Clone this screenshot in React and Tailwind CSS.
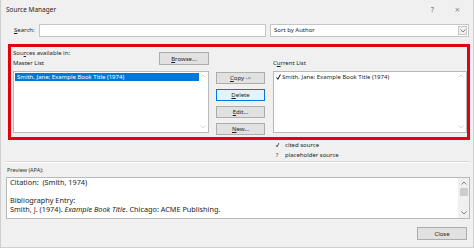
import React from "react";

const Chev = ({ up, className = "" }) => (
  <svg width="6" height="4" viewBox="0 0 6 4" className={className}>
    {up ? (
      <path d="M0.5 3.5 L3 1 L5.5 3.5" fill="none" stroke="currentColor" strokeWidth="0.8" />
    ) : (
      <path d="M0.5 0.5 L3 3 L5.5 0.5" fill="none" stroke="currentColor" strokeWidth="0.8" />
    )}
  </svg>
);

const Check = ({ className = "" }) => (
  <svg width="5" height="6" viewBox="0 0 5 6" className={className}>
    <path d="M0.6 3.4 L1.9 5.3 L4.4 0.4" fill="none" stroke="#111" strokeWidth="1" />
  </svg>
);

const Btn = ({ children, focused, className = "" }) => (
  <div
    className={
      "flex h-[12px] items-center justify-center border text-[6px] leading-none " +
      (focused ? "border-[#0078d7] bg-[#e5f1fb] " : "border-[#adadad] bg-[#e1e1e1] ") +
      className
    }
  >
    {children}
  </div>
);

const ListBox = ({ children, className = "" }) => (
  <div className={"relative h-[62px] border border-[#b9b9b9] bg-white " + className}>
    {children}
    <div className="absolute right-[2px] top-[2px] text-[#cccccc]">
      <Chev up />
    </div>
    <div className="absolute bottom-[3px] right-[2px] text-[#cccccc]">
      <Chev />
    </div>
  </div>
);

export default function App() {
  return (
    <div
      className="flex h-[248px] w-[474px] flex-col overflow-hidden border-x border-b border-[#cfcfcf] bg-[#f0f0f0] text-[#1e1e1e]"
      style={{ fontFamily: '"Noto Sans", "Open Sans", Arial, sans-serif' }}
    >
      {/* title bar */}
      <div className="flex h-[20px] shrink-0 items-center pl-[5px] pr-[13px] text-[6.5px]">
        <span>Source Manager</span>
        <span className="ml-auto text-[#555]">?</span>
        <span className="ml-[21px] text-[9px] font-light text-[#444]">×</span>
      </div>

      {/* search row */}
      <div className="mt-[4px] flex h-[13px] shrink-0 items-center">
        <span className="w-[38px] pl-[13px] text-[6px]">
          <u>S</u>earch:
        </span>
        <div className="h-[13px] w-[227px] border border-[#c5c5c5] bg-white" />
        <div className="ml-[4px] flex h-[13px] w-[199px] items-center border border-[#c5c5c5] bg-white pl-[3px] text-[6px]">
          <span>Sort by Author</span>
          <div className="ml-auto mr-[1px] flex h-[9px] w-[9px] items-center justify-center border border-[#c8c8c8] bg-[#f0f0f0] text-[#666]">
            <Chev />
          </div>
        </div>
      </div>

      {/* red highlighted region */}
      <div className="ml-[7px] mt-[7px] flex h-[96px] w-[462px] shrink-0 border-[3px] border-[#e3000f]">
        {/* left column */}
        <div className="ml-[2px] flex w-[196px] flex-col">
          <div className="flex h-[24px]">
            <div className="flex flex-col pt-[1px] text-[6px] leading-[10px]">
              <span>
                Sou<u>r</u>ces available in:
              </span>
              <span>Master List</span>
            </div>
            <Btn className="ml-auto mt-[5px] h-[13px] w-[50px]">
              <span>
                <u>B</u>rowse...
              </span>
            </Btn>
          </div>
          <ListBox>
            <div className="mx-[1px] mt-[1px] flex h-[8px] w-[184px] items-center bg-[#0078d7] pl-[2px] text-[6px] leading-none text-white">
              Smith, Jane; Example Book Title (1974)
            </div>
          </ListBox>
        </div>

        {/* center buttons */}
        <div className="ml-[7px] mt-[25px] flex w-[49px] flex-col gap-[5px]">
          <Btn>
            <span>
              <u>C</u>opy -&gt;
            </span>
          </Btn>
          <Btn focused>
            <span>
              <u>D</u>elete
            </span>
          </Btn>
          <Btn>
            <span>
              <u>E</u>dit...
            </span>
          </Btn>
          <Btn>
            <span>
              <u>N</u>ew...
            </span>
          </Btn>
        </div>

        {/* right column */}
        <div className="ml-[8px] flex w-[194px] flex-col">
          <div className="flex h-[24px] items-end pb-[3px] text-[6px] leading-[10px]">
            <span>
              C<u>u</u>rrent List
            </span>
          </div>
          <ListBox>
            <div className="ml-[2px] mt-[2px] flex items-center gap-[1px] text-[6px] leading-none">
              <Check />
              <span>Smith, Jane; Example Book Title (1974)</span>
            </div>
          </ListBox>
        </div>
      </div>

      {/* legend */}
      <div className="ml-[274px] flex shrink-0 flex-col text-[6px] leading-[10px] text-[#222]">
        <div className="flex items-center">
          <span className="flex w-[10px] items-center">
            <Check className="scale-75" />
          </span>
          <span>cited source</span>
        </div>
        <div className="flex items-center">
          <span className="w-[10px] pl-[1px] text-[5px]">?</span>
          <span>placeholder source</span>
        </div>
      </div>

      {/* separator */}
      <div className="mx-[4px] mt-[1px] h-[2px] shrink-0 border-t border-b border-t-[#d9d9d9] border-b-white" />

      {/* preview */}
      <div className="ml-[6px] mt-[2px] h-[10px] shrink-0 text-[5.5px] leading-[10px] text-[#333]">
        Preview (APA):
      </div>
      <div className="ml-[5px] mt-[2px] flex h-[42px] w-[464px] shrink-0 border border-[#b9b9b9] bg-white">
        <div className="flex-1 pl-[3px] text-[7.3px] leading-[9px]">
          <div>Citation:&nbsp;&nbsp;(Smith, 1974)</div>
          <div>&nbsp;</div>
          <div>Bibliography Entry:</div>
          <div>
            Smith, J. (1974). <i>Example Book Title</i>. Chicago: ACME Publishing.
          </div>
        </div>
        <div className="flex w-[11px] flex-col items-center bg-[#f0f0f0] text-[#666]">
          <div className="mt-[3px]">
            <Chev up />
          </div>
          <div className="mt-[3px] h-[8px] w-[8px] bg-[#cdcdcd]" />
          <div className="mb-[3px] mt-auto">
            <Chev />
          </div>
        </div>
      </div>

      {/* close */}
      <div className="mt-[8px] flex shrink-0 justify-end pr-[6px]">
        <Btn className="h-[13px] w-[50px]">Close</Btn>
      </div>
    </div>
  );
}
